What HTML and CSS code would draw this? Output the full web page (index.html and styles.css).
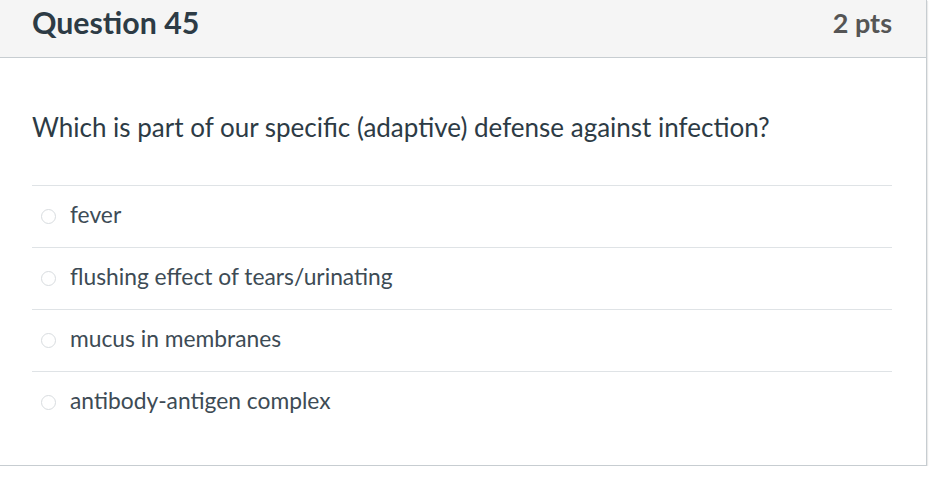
FILE: index.html
```html
<!DOCTYPE html>
<html>
<head>
<meta charset="utf-8">
<link rel="stylesheet" href="styles.css">
</head>
<body>
<div class="card">
  <div class="header">
    <span class="title">Question 45</span>
    <span class="pts">2 pts</span>
  </div>
  <div class="body">
    <div class="question">Which is part of our specific (adaptive) defense against infection?</div>
    <div class="answers">
      <div class="answer"><span class="radio"></span><span class="label">fever</span></div>
      <div class="answer"><span class="radio"></span><span class="label">flushing effect of tears/urinating</span></div>
      <div class="answer"><span class="radio"></span><span class="label">mucus in membranes</span></div>
      <div class="answer"><span class="radio"></span><span class="label">antibody-antigen complex</span></div>
    </div>
  </div>
</div>
</body>
</html>
```
FILE: styles.css
```css
* { box-sizing: border-box; }
html, body { margin: 0; padding: 0; background: #fff; }
body { font-family: Lato, "Open Sans", sans-serif; color: #2d3b45; }
.card {
  width: 928px;
  height: 466px;
  margin-left: -1px;
  border: 1px solid #c7cdd1;
  border-top: none;
  box-shadow: 1px 1px 1px rgba(0,0,0,0.08);
}
.header {
  height: 58px;
  background: #f5f5f5;
  border-bottom: 1px solid #c7cdd1;
  display: flex;
  align-items: center;
  justify-content: space-between;
  padding: 0 34px 12px 32px;
}
.title { font-size: 30.3px; font-weight: 700; color: #2d3b45; line-height: 1; }
.pts { font-size: 27px; font-weight: 700; color: #555; line-height: 1; }
.body { padding: 0 34px 0 32px; }
.question {
  font-size: 26px;
  height: 127px;
  padding-top: 54px;
  line-height: 1.2;
  color: #2d3b45;
}
.answer {
  height: 62px;
  border-top: 1px solid #dfe3e6;
  display: flex;
  align-items: center;
  padding-left: 9px;
}
.radio {
  width: 15px;
  height: 15px;
  border: 1px solid #d8dcdf;
  border-radius: 50%;
  margin-right: 14px;
  flex: none;
}
.label { font-size: 22.8px; color: #3d4b55; line-height: 1; margin-top: -4px; }
```
